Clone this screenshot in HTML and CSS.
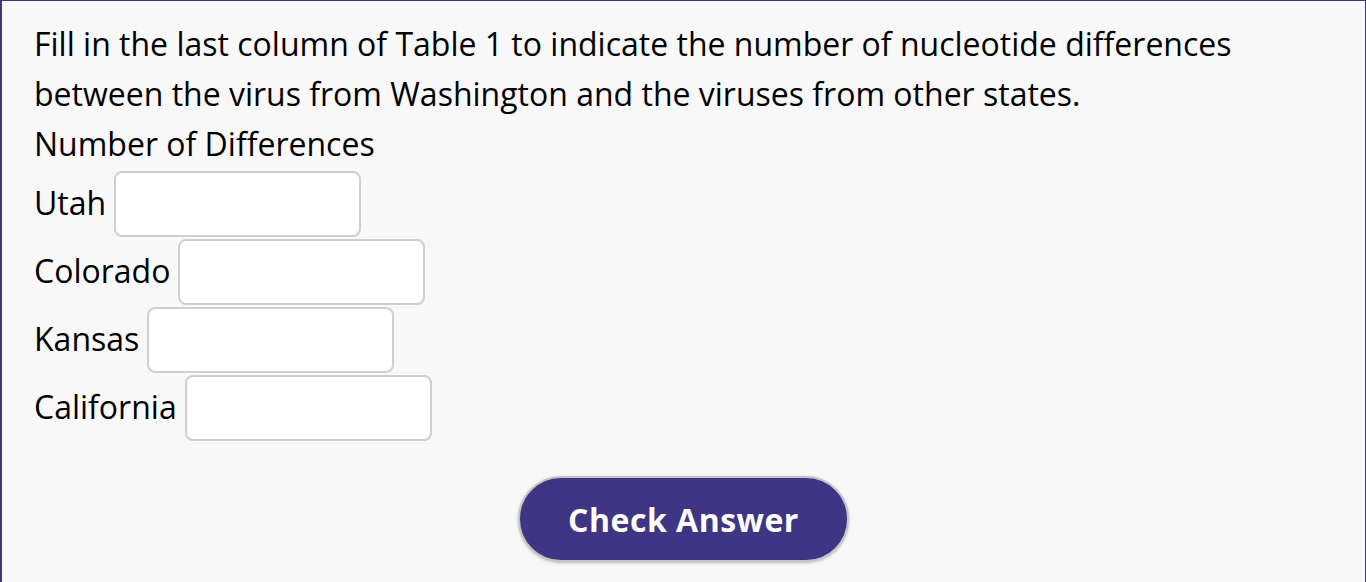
FILE: index.html
```html
<!DOCTYPE html>
<html lang="en">
<head>
<meta charset="utf-8">
<title>Number of Differences</title>
<link rel="stylesheet" href="styles.css">
</head>
<body>
<div class="frame">
  <p class="prompt">Fill in the last column of Table 1 to indicate the number of nucleotide differences between the virus from Washington and the viruses from other states.</p>
  <div class="heading">Number of Differences</div>
  <div class="rows">
    <div class="row"><label class="label" for="utah">Utah</label><input class="field" id="utah" type="text"></div>
    <div class="row"><label class="label" for="colorado">Colorado</label><input class="field" id="colorado" type="text"></div>
    <div class="row"><label class="label" for="kansas">Kansas</label><input class="field" id="kansas" type="text"></div>
    <div class="row"><label class="label" for="california">California</label><input class="field" id="california" type="text"></div>
  </div>
  <div class="actions">
    <button class="check" type="button">Check Answer</button>
  </div>
</div>
</body>
</html>
```
FILE: styles.css
```css
html, body {
  margin: 0;
  padding: 0;
  height: 100%;
}
body {
  background: #f8f8f8;
  font-family: "Open Sans", "DejaVu Sans", sans-serif;
  color: #000;
}
.frame {
  box-sizing: border-box;
  min-height: 100%;
  border-top: 1px solid #3c3584;
  border-left: 2px solid #3c3584;
  border-right: 1px solid #3c3584;
  background: #f8f8f8;
  padding: 18px 32px 0 32px;
}
.prompt {
  margin: 0;
  font-size: 32px;
  line-height: 50px;
  max-width: 1250px;
}
.heading {
  margin: 0;
  font-size: 32px;
  line-height: 50px;
}
.rows {
  display: flex;
  flex-direction: column;
  gap: 2px;
  margin-top: 2px;
}
.row {
  display: flex;
  align-items: flex-start;
  gap: 8px;
  height: 66px;
}
.label {
  font-size: 32px;
  line-height: 63px;
}
.field {
  box-sizing: border-box;
  width: 247px;
  height: 66px;
  margin: 0;
  border: 2px solid #cfcfcf;
  border-radius: 8px;
  background: #fff;
  font-family: inherit;
  font-size: 28px;
  padding: 0 10px;
  outline: none;
}
.actions {
  display: flex;
  justify-content: center;
  margin-top: 35px;
}
.check {
  box-sizing: border-box;
  width: 331px;
  height: 86px;
  border: 2px solid #c4c4c4;
  border-radius: 43px;
  background: #3e3584;
  color: #fff;
  font-family: "Open Sans", "DejaVu Sans", sans-serif;
  font-weight: 700;
  font-size: 32px;
  letter-spacing: 0.5px;
  box-shadow: 0 1px 3px rgba(0,0,0,0.25);
  cursor: pointer;
  padding: 0;
}
```
